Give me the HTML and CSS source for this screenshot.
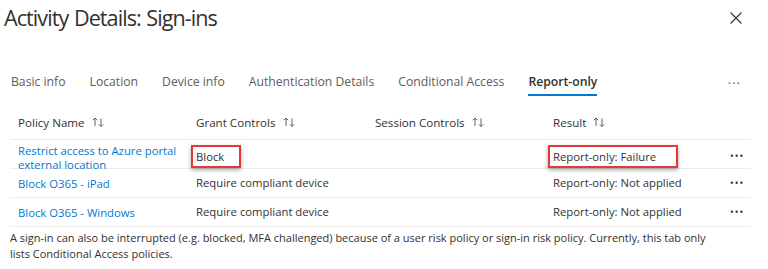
FILE: index.html
```html
<!DOCTYPE html>
<html lang="en">
<head>
<meta charset="utf-8">
<title>Activity Details: Sign-ins</title>
<link rel="stylesheet" href="styles.css">
</head>
<body>
<div class="panel">
  <header class="head">
    <h1 class="title">Activity Details: Sign-ins</h1>
    <button class="close" aria-label="Close">
      <svg width="12" height="12" viewBox="0 0 12 12"><path d="M0.5 0.5 L11.5 11.5 M11.5 0.5 L0.5 11.5" stroke="#323130" stroke-width="1.1" fill="none"/></svg>
    </button>
  </header>

  <nav class="tabs">
    <span class="tab">Basic info</span>
    <span class="tab">Location</span>
    <span class="tab">Device info</span>
    <span class="tab">Authentication Details</span>
    <span class="tab">Conditional Access</span>
    <span class="tab active">Report-only</span>
    <span class="tab-more">&middot;&middot;&middot;</span>
  </nav>

  <div class="table">
    <div class="row hrow">
      <div class="cell">Policy Name <svg class="sort" width="12" height="10" viewBox="0 0 12 10"><path d="M3 9 V1 M0.8 3.2 L3 1 L5.2 3.2 M9 1.5 V9.5 M6.8 7.3 L9 9.5 L11.2 7.3" stroke="#605e5c" stroke-width="1" fill="none"/></svg></div>
      <div class="cell">Grant Controls <svg class="sort" width="12" height="10" viewBox="0 0 12 10"><path d="M3 9 V1 M0.8 3.2 L3 1 L5.2 3.2 M9 1.5 V9.5 M6.8 7.3 L9 9.5 L11.2 7.3" stroke="#605e5c" stroke-width="1" fill="none"/></svg></div>
      <div class="cell">Session Controls <svg class="sort" width="12" height="10" viewBox="0 0 12 10"><path d="M3 9 V1 M0.8 3.2 L3 1 L5.2 3.2 M9 1.5 V9.5 M6.8 7.3 L9 9.5 L11.2 7.3" stroke="#605e5c" stroke-width="1" fill="none"/></svg></div>
      <div class="cell">Result <svg class="sort" width="12" height="10" viewBox="0 0 12 10"><path d="M3 9 V1 M0.8 3.2 L3 1 L5.2 3.2 M9 1.5 V9.5 M6.8 7.3 L9 9.5 L11.2 7.3" stroke="#605e5c" stroke-width="1" fill="none"/></svg></div>
      <div class="cell"></div>
    </div>
    <div class="row">
      <div class="cell link two">Restrict access to Azure portal<br>external location</div>
      <div class="cell"><span class="mark mark-block">Block</span></div>
      <div class="cell"></div>
      <div class="cell"><span class="mark mark-fail">Report-only: Failure</span></div>
      <div class="cell more">&bull;&bull;&bull;</div>
    </div>
    <div class="row">
      <div class="cell link">Block O365 - iPad</div>
      <div class="cell">Require compliant device</div>
      <div class="cell"></div>
      <div class="cell">Report-only: Not applied</div>
      <div class="cell more">&bull;&bull;&bull;</div>
    </div>
    <div class="row">
      <div class="cell link">Block O365 - Windows</div>
      <div class="cell">Require compliant device</div>
      <div class="cell"></div>
      <div class="cell">Report-only: Not applied</div>
      <div class="cell more">&bull;&bull;&bull;</div>
    </div>
  </div>

  <p class="note">A sign-in can also be interrupted (e.g. blocked, MFA challenged) because of a user risk policy or sign-in risk policy. Currently, this tab only<br>lists Conditional Access policies.</p>
</div>
</body>
</html>
```

FILE: styles.css
```css
* { box-sizing: border-box; }
html, body {
  margin: 0;
  padding: 0;
  background: #ffffff;
}
body {
  font-family: "Open Sans", "Noto Sans", "Liberation Sans", sans-serif;
  color: #323130;
  width: 768px;
  height: 269px;
  overflow: hidden;
}
.panel {
  padding: 0 17px 0 10px;
}
.head {
  display: flex;
  align-items: center;
  justify-content: space-between;
  height: 36px;
}
.title {
  margin: 0 0 0 -6px;
  font-size: 21.6px;
  font-weight: 400;
  letter-spacing: -0.95px;
  word-spacing: 1px;
  color: #323130;
  line-height: 36px;
}
.close {
  border: 0;
  background: none;
  padding: 0;
  width: 12px;
  height: 12px;
  margin-right: 9px;
  display: flex;
}
.tabs {
  display: flex;
  align-items: center;
  margin-top: 34px;
  padding-left: 1px;
  height: 26px;
  font-size: 12.2px;
  color: #605e5c;
}
.tab {
  margin-right: 24px;
  height: 26px;
  line-height: 24px;
  border-bottom: 2px solid transparent;
  white-space: nowrap;
}
.tab.active {
  color: #323130;
  font-weight: 600;
  border-bottom-color: #0078d4;
}
.tab-more {
  margin-left: auto;
  margin-right: 10px;
  letter-spacing: 1px;
  font-size: 13px;
  color: #605e5c;
}
.table {
  margin-top: 9px;
  font-size: 11.3px;
  width: 741px;
}
.row {
  display: grid;
  grid-template-columns: 178px 179px 178px 180px 26px;
  border-bottom: 1px solid #edebe9;
  height: 29px;
  align-items: center;
}
.hrow {
  height: 35px;
  font-weight: 400;
  font-size: 11.6px;
  color: #323130;
}
.row:not(.hrow) .cell { line-height: 14px; }
.cell {
  padding-left: 8px;
  white-space: nowrap;
  display: flex;
  align-items: center;
  gap: 7px;
}
.cell.link {
  display: block;
  color: #0078d4;
  padding-top: 1px;
}
.cell.link.two {
  padding-top: 4px;
}
.sort { flex: none; }
.mark {
  display: inline-block;
  margin-left: -5px;
  padding: 2px 3px 2px 3px;
  border: 2px solid #e5383b;
  box-shadow: 0 2px 4px rgba(0,0,0,0.35);
  line-height: 15px;
}
.mark-block { width: 50px; }
.mark-fail { width: 130px; }
.more {
  font-size: 10px;
  letter-spacing: 1px;
  color: #323130;
  padding-left: 5px;
}
.note {
  margin: 3px 0 0 0;
  font-size: 11px;
  line-height: 16px;
  white-space: nowrap;
  color: #323130;
}
```
